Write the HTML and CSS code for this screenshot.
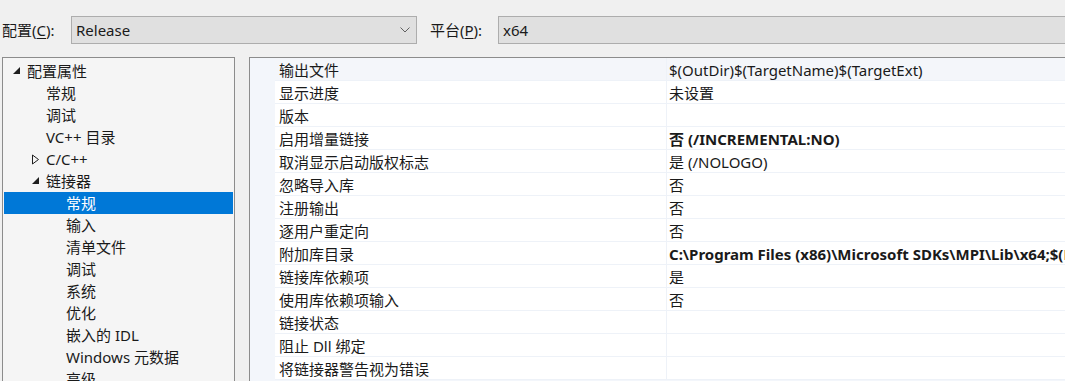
FILE: index.html
```html
<!DOCTYPE html>
<html lang="zh-CN">
<head>
  <meta charset="UTF-8">
  <meta name="viewport" content="width=device-width, initial-scale=1.0">
  <title>属性页</title>
  <link rel="stylesheet" href="styles.css">
</head>
<body>
  <div class="top">
    <label class="label label-config">配置(<u>C</u>):</label>
    <div class="combo combo-config">
      <span>Release</span>
      <svg class="chevron" width="10" height="6" viewBox="0 0 10 6"><polyline points="0.5,0.5 5,5 9.5,0.5" fill="none" stroke="#606060" stroke-width="1"/></svg>
    </div>
    <label class="label label-platform">平台(<u>P</u>):</label>
    <div class="combo combo-platform">
      <span>x64</span>
    </div>
  </div>

  <div class="main">
    <ul class="tree">
      <li class="lvl0"><svg class="arrow" width="9" height="9" viewBox="0 0 9 9"><polygon points="8,1 8,8 1,8" fill="#1e1e1e"/></svg>配置属性</li>
      <li class="lvl1">常规</li>
      <li class="lvl1">调试</li>
      <li class="lvl1">VC++ 目录</li>
      <li class="lvl1"><svg class="arrow" width="9" height="11" viewBox="0 0 9 11"><polygon points="1.5,1 7.5,5.5 1.5,10" fill="none" stroke="#1e1e1e" stroke-width="1"/></svg>C/C++</li>
      <li class="lvl1"><svg class="arrow" width="9" height="9" viewBox="0 0 9 9"><polygon points="8,1 8,8 1,8" fill="#1e1e1e"/></svg>链接器</li>
      <li class="lvl2 selected">常规</li>
      <li class="lvl2">输入</li>
      <li class="lvl2">清单文件</li>
      <li class="lvl2">调试</li>
      <li class="lvl2">系统</li>
      <li class="lvl2">优化</li>
      <li class="lvl2">嵌入的 IDL</li>
      <li class="lvl2">Windows 元数据</li>
      <li class="lvl2">高级</li>
    </ul>

    <div class="grid-panel">
      <div class="props" id="props"></div>
    </div>
  </div>

  <script>
    const props = [
      ["输出文件", "$(OutDir)$(TargetName)$(TargetExt)"],
      ["显示进度", "未设置"],
      ["版本", ""],
      ["启用增量链接", "否 (/INCREMENTAL:NO)", true],
      ["取消显示启动版权标志", "是 (/NOLOGO)"],
      ["忽略导入库", "否"],
      ["注册输出", "否"],
      ["逐用户重定向", "否"],
      ["附加库目录", "C:\\Program Files (x86)\\Microsoft SDKs\\MPI\\Lib\\x64;$(LibraryPath)", true],
      ["链接库依赖项", "是"],
      ["使用库依赖项输入", "否"],
      ["链接状态", ""],
      ["阻止 Dll 绑定", ""],
      ["将链接器警告视为错误", ""],
    ];

    const list = document.getElementById("props");
    props.forEach(([name, value, bold], i) => {
      const row = document.createElement("div");
      row.className = "row" + (i === 0 ? " current" : "");
      row.innerHTML = `
        <div class="name">${name}</div>
        <div class="value${bold ? " bold" : ""}">${value}</div>
      `;
      list.appendChild(row);
    });
  </script>
</body>
</html>
```

FILE: styles.css
```css
body {
  margin: 0;
  width: 1065px;
  height: 381px;
  overflow: hidden;
  background: #f0f0f0;
  color: #1a1a1a;
  font-family: "Noto Sans", "Noto Sans CJK SC", sans-serif;
  font-size: 15px;
}

/* Top: configuration / platform combos */
.top {
  display: flex;
  align-items: center;
  padding-top: 16px;
  height: 28px;
}

.top > * {
  flex-shrink: 0;
}

.label {
  line-height: 28px;
}

.label u {
  text-decoration-thickness: 1px;
  text-underline-offset: 2px;
}

.label-config {
  margin-left: 2px;
  width: 69px;
}

.label-platform {
  margin-left: 13px;
  width: 68px;
}

.combo {
  box-sizing: border-box;
  height: 28px;
  background: #e0e0e0;
  border: 1px solid #adadad;
  display: flex;
  align-items: center;
  padding-left: 4px;
  line-height: 26px;
}

.combo-config {
  width: 346px;
  justify-content: space-between;
  padding-right: 6px;
}

.combo-platform {
  width: 600px;
}

.chevron {
  display: block;
}

/* Main area */
.main {
  display: flex;
  margin-top: 13px;
  gap: 14px;
}

.tree {
  flex-shrink: 0;
  list-style: none;
  margin: 0 0 0 2px;
  padding: 2px 1px 0;
  width: 229px;
  height: 330px;
  background: #f5f5f5;
  border: 1px solid #8c8c8c;
  border-bottom: none;
  overflow: hidden;
}

.tree li {
  height: 22px;
  line-height: 22px;
  white-space: nowrap;
  position: relative;
}

.tree .lvl0 { padding-left: 23px; }
.tree .lvl1 { padding-left: 42px; }
.tree .lvl2 { padding-left: 62px; }

.tree .arrow {
  position: absolute;
  top: 6px;
}

.tree .lvl0 .arrow { left: 8px; }
.tree .lvl1 .arrow { left: 27px; }

.tree .selected {
  background: #0078d7;
  color: #fff;
}

.grid-panel {
  flex: 1;
  height: 330px;
  background: #f3f6fb;
  border-top: 1px solid #8c8c8c;
  border-left: 1px solid #8c8c8c;
  padding-left: 25px;
  overflow: hidden;
}

.row {
  display: grid;
  grid-template-columns: 392px 1fr;
  height: 22px;
  line-height: 24px;
  background: #fff;
  border-bottom: 1px solid #eef2f8;
  overflow: hidden;
}

.row.current {
  background: #f4f6fa;
}

.row .name {
  padding-left: 4px;
  border-right: 1px solid #eef2f8;
  white-space: nowrap;
}

.row .value {
  padding-left: 2px;
  white-space: nowrap;
  overflow: hidden;
}

.row .value.bold {
  font-weight: bold;
}
```
